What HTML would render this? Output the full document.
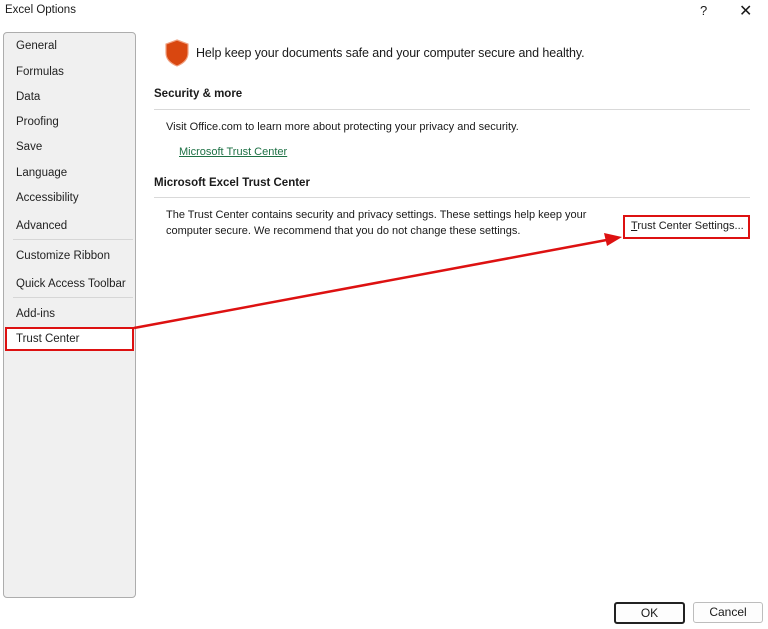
<!DOCTYPE html>
<html><head><style>
body{margin:0;width:768px;height:629px;background:#fff;font-family:"Liberation Sans",sans-serif;font-size:12px;color:#1a1a1a;position:relative;overflow:hidden}
.a{position:absolute;white-space:nowrap}
.side{position:absolute;left:3px;top:32px;width:131px;height:564px;background:#f0f0f0;border:1px solid #adadad;border-radius:4px}
.it{position:absolute;left:12px;font-size:11.5px;color:#222}
.sep{position:absolute;left:9px;width:120px;height:1px;background:#d6d6d6}
.hr{position:absolute;left:154px;width:596px;height:1px;background:#d9d9d9}
.btn{position:absolute;height:19px;border:1px solid #bdbdbd;border-radius:3px;text-align:center;line-height:19px;font-size:12px;background:#fdfdfd}
</style></head><body>
<div class="a" style="left:5px;top:4px;font-size:11.5px">Excel Options</div>
<div class="a" style="left:700px;top:3px;font-size:13px">?</div>
<div class="a" style="left:739px;top:1px;font-size:16px">✕</div>
<div class="side">
<div class="it" style="top:7px">General</div>
<div class="it" style="top:33px">Formulas</div>
<div class="it" style="top:58px">Data</div>
<div class="it" style="top:83px">Proofing</div>
<div class="it" style="top:108px">Save</div>
<div class="it" style="top:134px">Language</div>
<div class="it" style="top:159px">Accessibility</div>
<div class="it" style="top:187px">Advanced</div>
<div class="sep" style="top:206px"></div>
<div class="it" style="top:217px">Customize Ribbon</div>
<div class="it" style="top:245px">Quick Access Toolbar</div>
<div class="sep" style="top:264px"></div>
<div class="it" style="top:275px">Add-ins</div>
<div style="position:absolute;left:1px;top:294px;width:125px;height:20px;background:#fff;border:2px solid #d11;"></div>
<div class="it" style="top:300px">Trust Center</div>
</div>
<svg class="a" style="left:164px;top:39px" width="26" height="28" viewBox="0 0 26 28"><path d="M13 1 L24 5 V14 C24 21 18 25 13 27 C8 25 2 21 2 14 V5 Z" fill="#d94710" stroke="#f0a080" stroke-width="1.2"/></svg>
<div class="a" style="left:196px;top:46px;font-size:12.5px;letter-spacing:-0.1px">Help keep your documents safe and your computer secure and healthy.</div>
<div class="a" style="left:154px;top:88px;font-weight:bold;font-size:11.5px">Security &amp; more</div>
<div class="hr" style="top:109px"></div>
<div class="a" style="left:166px;top:121px;font-size:11px">Visit Office.com to learn more about protecting your privacy and security.</div>
<div class="a" style="left:179px;top:146px;font-size:11px;color:#1e7145;text-decoration:underline">Microsoft Trust Center</div>
<div class="a" style="left:154px;top:177px;font-weight:bold;font-size:11.5px">Microsoft Excel Trust Center</div>
<div class="hr" style="top:197px"></div>
<div class="a" style="left:166px;top:208px;font-size:11px;line-height:15.5px">The Trust Center contains security and privacy settings. These settings help keep your<br>computer secure. We recommend that you do not change these settings.</div>
<div style="position:absolute;left:623px;top:215px;width:123px;height:20px;border:2px solid #d11;background:#fff"></div>
<div class="a" style="left:631px;top:220px;font-size:11px"><u>T</u>rust Center Settings...</div>
<svg class="a" style="left:0;top:0" width="768" height="629"><line x1="134" y1="328" x2="612" y2="239" stroke="#d11" stroke-width="2.5"/><polygon points="622,237 604,233 607,246" fill="#d11"/></svg>
<div class="btn" style="left:614px;top:602px;width:67px;border:2px solid #222;height:18px;line-height:18px">OK</div>
<div class="btn" style="left:693px;top:602px;width:68px">Cancel</div>
</body></html>
